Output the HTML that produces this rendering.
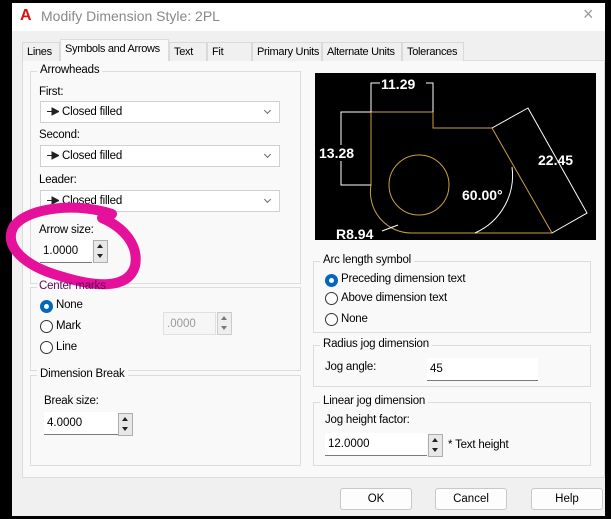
<!DOCTYPE html>
<html><head><style>
*{box-sizing:border-box}
body{margin:0;width:611px;height:519px;overflow:hidden;background:#000;font-family:"Liberation Sans",sans-serif;font-size:11.5px;color:#000;position:relative}
.a{position:absolute}
.win{left:12px;top:3px;width:593px;height:513px;background:#f0f0f0}
.title{left:12px;top:3px;width:593px;height:28px;background:#fff}
.tab{position:absolute;top:42px;height:19px;border:1px solid #d9d9d9;border-bottom:none;background:#f0f0f0;padding:3px 0 0 4px;font-size:11px;letter-spacing:-0.3px;white-space:nowrap;overflow:hidden}
.panel{left:22px;top:60px;width:583px;height:418px;background:#f9f9f9;border:1px solid #dcdcdc}
.grp{position:absolute;border:1px solid #dcdcdc}
.grp>span{position:absolute;top:-8px;left:6px;background:#f9f9f9;padding:0 3px;font-size:11.5px;letter-spacing:-0.2px}
.combo{position:absolute;height:22px;background:#fff;border:1px solid #d0d0d0;font-size:11.5px;padding:4px 4px 0 6px;letter-spacing:-0.2px}
.combo svg{vertical-align:-1px;margin-right:3px}
.combo:after{content:"";position:absolute;right:9px;top:6px;width:4px;height:4px;border-right:1px solid #666;border-bottom:1px solid #666;transform:rotate(45deg)}
.inp{position:absolute;height:23px;background:#fff;border-bottom:1px solid #7a7a7a;padding:5px 3px;font-size:11.5px}
.spin{position:absolute;width:15px;height:23px;border:1px solid #adadad;background:#e8e8e8}
.spin:before{content:"";position:absolute;left:3px;top:3px;border:3.5px solid transparent;border-bottom:4px solid #222;border-top:none}
.spin:after{content:"";position:absolute;left:3px;bottom:4px;border:3.5px solid transparent;border-top:4px solid #222;border-bottom:none}
.rad{position:absolute;width:13px;height:13px;border-radius:50%;border:1px solid #333;background:#fff}
.rad.on{border:4px solid #0067c0}
.btn{position:absolute;top:488px;height:22px;background:#fdfdfd;border:1px solid #c8c8c8;border-radius:3px;text-align:center;font-size:11.5px;padding-top:4px}
.l{position:absolute;font-size:11.5px;white-space:nowrap;letter-spacing:-0.2px}
</style></head><body>
<div class="a win"></div>
<div class="a title"></div>
<div class="a" style="left:20px;top:7px;color:#d11;font-weight:bold;font-size:16px">A</div>
<div class="a" style="left:41px;top:8px;color:#888;font-size:14px">Modify Dimension Style: 2PL</div>
<div class="a" style="left:583px;top:4px;color:#999;font-size:18px">×</div>
<div class="a panel"></div>
<div class="tab" style="left:22px;width:38px">Lines</div>
<div class="tab" style="left:60px;top:39px;width:109px;height:22px;background:#f9f9f9;border-color:#dcdcdc;padding-top:3px">Symbols and Arrows</div>
<div class="tab" style="left:169px;width:38px">Text</div>
<div class="tab" style="left:207px;width:45px">Fit</div>
<div class="tab" style="left:252px;width:70px">Primary Units</div>
<div class="tab" style="left:322px;width:80px">Alternate Units</div>
<div class="tab" style="left:402px;width:62px">Tolerances</div>

<div class="grp" style="left:30px;top:71px;width:271px;height:213px"><span>Arrowheads</span></div>
<div class="l" style="left:39px;top:86px">First:</div>
<div class="combo" style="left:40px;top:101px;width:240px"><svg width="12" height="9"><path d="M0 4.5H6M5 1L12 4.5L5 8Z" stroke="#222" fill="#222"/></svg>Closed filled</div>
<div class="l" style="left:39px;top:129px">Second:</div>
<div class="combo" style="left:40px;top:145px;width:240px"><svg width="12" height="9"><path d="M0 4.5H6M5 1L12 4.5L5 8Z" stroke="#222" fill="#222"/></svg>Closed filled</div>
<div class="l" style="left:39px;top:174px">Leader:</div>
<div class="combo" style="left:40px;top:190px;width:240px"><svg width="12" height="9"><path d="M0 4.5H6M5 1L12 4.5L5 8Z" stroke="#222" fill="#222"/></svg>Closed filled</div>
<div class="l" style="left:39px;top:224px">Arrow size:</div>
<div class="inp" style="left:40px;top:240px;width:52px">1.0000</div>
<div class="spin" style="left:93px;top:240px"></div>

<div class="grp" style="left:30px;top:287px;width:271px;height:84px"><span style="color:transparent">Center marks</span></div>
<div class="rad on" style="left:40px;top:300px"></div><div class="l" style="left:56px;top:299px">None</div>
<div class="rad" style="left:40px;top:320px"></div><div class="l" style="left:56px;top:320px">Mark</div>
<div class="rad" style="left:40px;top:341px"></div><div class="l" style="left:56px;top:341px">Line</div>
<div class="inp" style="left:163px;top:312px;width:53px;color:#999;border:1px solid #e0e0e0;background:#f6f6f6">.0000</div>
<div class="spin" style="left:217px;top:312px;opacity:.6"></div>

<div class="grp" style="left:30px;top:375px;width:271px;height:91px"><span>Dimension Break</span></div>
<div class="l" style="left:44px;top:395px">Break size:</div>
<div class="inp" style="left:44px;top:412px;width:74px">4.0000</div>
<div class="spin" style="left:118px;top:413px"></div>

<svg class="a" style="left:0;top:0" width="611" height="519">
<rect x="315" y="73" width="281" height="167" fill="#000"/>
<g fill="none" stroke="#c8a040" stroke-width="1">
<path d="M371 112H433V128H492L552 233H412A41 41 0 0 1 371 185Z"/>
<circle cx="419" cy="185" r="30"/>
</g>
<g fill="none" stroke="#fff" stroke-width="1">
<path d="M371 112V83H380M426 83H433V112"/>
<path d="M371 112H341V145M341 161V185H371"/>
<path d="M492 128L528 108L587 213L552 233"/>
<path d="M512 167A63 63 0 0 1 475 233"/>
<path d="M382 231L398 225"/>
</g>
<g fill="#fff" font-family="Liberation Sans" font-size="14" font-weight="bold">
<text x="381" y="89">11.29</text>
<text x="319" y="158">13.28</text>
<text x="538" y="165">22.45</text>
<text x="462" y="200">60.00°</text>
<text x="336" y="239">R8.94</text>
</g>
</svg>

<div class="grp" style="left:313px;top:261px;width:278px;height:72px"><span>Arc length symbol</span></div>
<div class="rad on" style="left:325px;top:274px"></div><div class="l" style="left:341px;top:273px">Preceding dimension text</div>
<div class="rad" style="left:325px;top:292px"></div><div class="l" style="left:341px;top:292px">Above dimension text</div>
<div class="rad" style="left:325px;top:313px"></div><div class="l" style="left:341px;top:313px">None</div>

<div class="grp" style="left:313px;top:345px;width:278px;height:42px"><span>Radius jog dimension</span></div>
<div class="l" style="left:325px;top:361px">Jog angle:</div>
<div class="inp" style="left:427px;top:358px;width:111px">45</div>

<div class="grp" style="left:313px;top:402px;width:278px;height:64px"><span>Linear jog dimension</span></div>
<div class="l" style="left:325px;top:414px">Jog height factor:</div>
<div class="inp" style="left:325px;top:433px;width:102px">12.0000</div>
<div class="spin" style="left:428px;top:434px"></div>
<div class="l" style="left:448px;top:439px">* Text height</div>

<div class="btn" style="left:340px;width:72px">OK</div>
<div class="btn" style="left:435px;width:72px">Cancel</div>
<div class="btn" style="left:531px;width:72px">Help</div>

<svg class="a" style="left:0;top:0" width="611" height="519">
<path d="M112 214C80 203 30 206 14 226C2 246 25 266 60 276C95 287 128 290 135 266C139 246 125 228 102 218" fill="none" stroke="#e5119a" stroke-width="10" stroke-linecap="round"/>
</svg>
<div class="l" style="left:39px;top:280px;color:#5a0a5a">Center marks</div>
</body></html>
